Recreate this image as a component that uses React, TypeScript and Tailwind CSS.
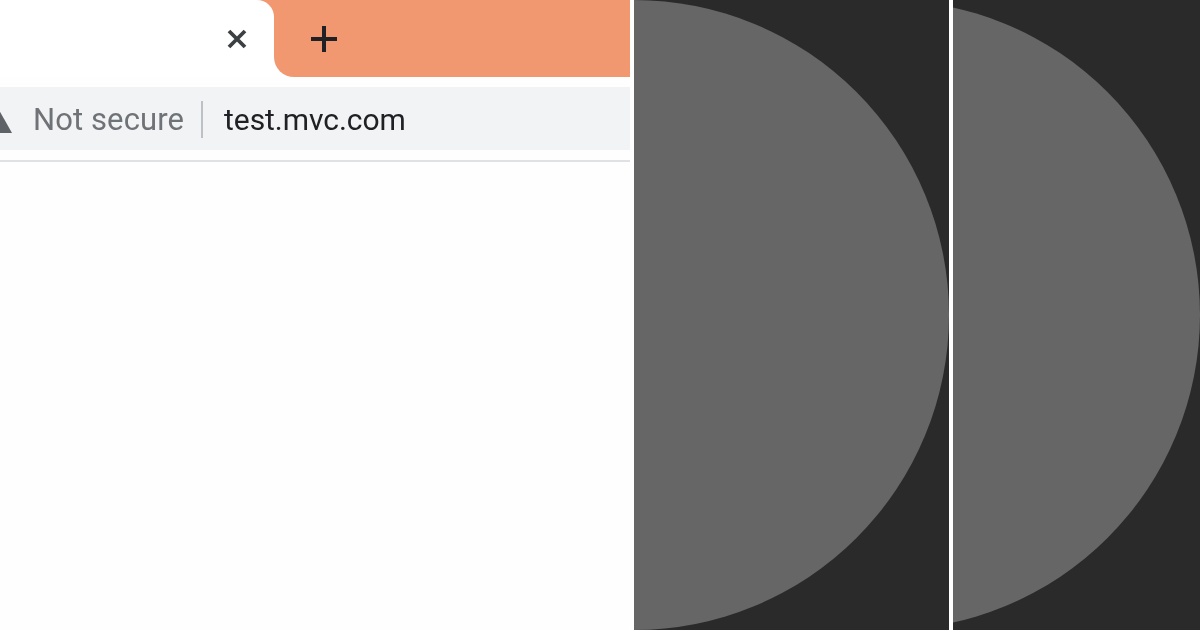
export default function App() {
  return (
    <div className="flex h-[630px] w-[1200px] overflow-hidden bg-white">
      {/* Browser crop */}
      <div className="flex w-[630px] shrink-0 flex-col bg-[#fefefe]">
        <div className="flex h-[77px] shrink-0 bg-white">
          <div className="w-[274px] bg-[#f29871]">
            <div className="flex h-[77px] items-center justify-end rounded-tr-[17px] bg-white pr-[27px]">
              <svg width="20" height="20" viewBox="0 0 20 20" fill="none" stroke="#3c4043" strokeWidth="3.8" className="blur-[0.4px]">
                <path d="M2 2l16 16M18 2L2 18" />
              </svg>
            </div>
          </div>
          <div className="flex flex-1 items-center rounded-bl-[20px] bg-[#f29871] pl-[36px]">
            <svg width="28" height="28" viewBox="0 0 28 28" fill="none" stroke="#202124" strokeWidth="4" className="blur-[0.4px]">
              <path d="M14 1v26M1 14h26" />
            </svg>
          </div>
        </div>
        <div className="mt-[10px] flex h-[63px] shrink-0 items-center bg-[#f1f3f4] font-['Roboto',sans-serif]">
          <svg width="12" height="24" viewBox="0 0 12 24" className="mt-[6px] shrink-0 blur-[0.4px]" fill="#5f6368">
            <path d="M-1 0L12 23H-14z" />
          </svg>
          <span className="ml-[21px] mt-[3px] text-[31px] tracking-[0.1px] text-[#6f7276] blur-[0.4px]">Not secure</span>
          <div className="ml-[17px] mt-[2px] h-[37px] w-[2px] bg-[#bdc1c6]" />
          <span className="ml-[21px] mt-[2px] text-[30px] tracking-[-0.05px] text-[#202124] blur-[0.4px]">test.mvc.com</span>
        </div>
        <div className="mt-[10px] h-[2px] shrink-0 bg-[#dfe1e5]" />
      </div>

      {/* Full circle, centred on the panel's left edge */}
      <div className="ml-[4px] h-[630px] w-[315px] shrink-0 overflow-hidden bg-[#2a2a2a]">
        <div className="ml-[-315px] h-[630px] w-[630px] rounded-full bg-[#666666]" />
      </div>

      {/* Same circle, shifted further out */}
      <div className="ml-[4px] h-[630px] w-[247px] shrink-0 overflow-hidden bg-[#2a2a2a]">
        <div className="ml-[-383px] h-[630px] w-[630px] rounded-full bg-[#666666]" />
      </div>
    </div>
  );
}
